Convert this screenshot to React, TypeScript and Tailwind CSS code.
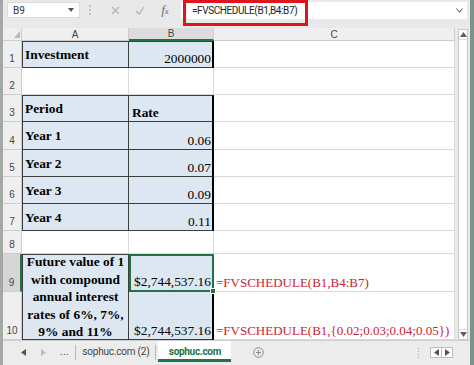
import React from "react";

const hdr =
  "bg-[#efefef] border-r border-b border-[#cdcdcd] flex items-end justify-center pb-[3px] text-[10px] leading-[11px] text-[#444] font-['Liberation_Sans',sans-serif]";
const empty = "bg-white border-r border-b border-[#dadada]";
const aTop =
  "bg-[#dde7f2] border border-[#3d3d3d] flex items-center pl-[2px] font-bold whitespace-nowrap";
const aMid =
  "bg-[#dde7f2] border-l border-r border-b border-[#3d3d3d] flex items-center pl-[2px] font-bold whitespace-nowrap";
const bTop =
  "bg-[#dde7f2] border-t border-b border-l-0 border-[#3d3d3d] border-r-2 border-r-black flex items-end justify-end pr-[1px] pb-[1px] whitespace-nowrap";
const bMid =
  "bg-[#dde7f2] border-b border-[#3d3d3d] border-r-2 border-r-black flex items-end justify-end pr-[1px] pb-[1px] whitespace-nowrap";
const cRed =
  "bg-white border-r border-b border-[#dadada] flex items-end pl-[2px] pb-[1px] text-[13px] text-[#cc2233] whitespace-nowrap";

function Tri({ dir, color }: { dir: "l" | "r" | "u" | "d"; color: string }) {
  const pts =
    dir === "l"
      ? "5,0 5,7 0,3.5"
      : dir === "r"
      ? "0,0 0,7 5,3.5"
      : dir === "u"
      ? "0,5 7,5 3.5,0"
      : "0,0 7,0 3.5,5";
  const w = dir === "l" || dir === "r" ? 5 : 7;
  const h = dir === "l" || dir === "r" ? 7 : 5;
  return (
    <svg width={w} height={h} viewBox={`0 0 ${w} ${h}`}>
      <polygon points={pts} fill={color} />
    </svg>
  );
}

export default function App() {
  return (
    <div className="w-[474px] h-[365px] flex bg-[#e9e9e9] overflow-hidden">
      <div className="w-[3px] bg-[#a4a9a6]" />
      <div className="w-[467px] flex flex-col">
        {/* formula bar */}
        <div className="h-[28px] relative flex items-start pt-[2px] font-['Roboto',sans-serif]">
          <div className="ml-[4px] w-[73px] h-[16px] bg-white border border-[#dcdcdc] flex items-center justify-between pl-[5px] pr-[5px]">
            <span className="text-[10px] text-[#333]">B9</span>
            <svg width="6" height="4" viewBox="0 0 6 4">
              <polygon points="0,0 6,0 3,4" fill="#555" />
            </svg>
          </div>
          <div className="w-[20px] h-[16px] flex flex-col items-center justify-center gap-[2px]">
            <div className="w-[2px] h-[2px] bg-[#c4c4c4]" />
            <div className="w-[2px] h-[2px] bg-[#c4c4c4]" />
            <div className="w-[2px] h-[2px] bg-[#c4c4c4]" />
          </div>
          <div className="w-[30px] h-[16px] flex items-center justify-center">
            <svg width="9" height="9" viewBox="0 0 9 9">
              <path d="M1 1 L8 8 M8 1 L1 8" stroke="#b0b0b0" strokeWidth="1.2" />
            </svg>
          </div>
          <div className="w-[20px] h-[16px] flex items-center justify-center">
            <svg width="10" height="9" viewBox="0 0 10 9">
              <path d="M1 5 L4 8 L9 1" stroke="#b0b0b0" strokeWidth="1.2" fill="none" />
            </svg>
          </div>
          <div className="w-[30px] h-[16px] flex items-center justify-center font-['Liberation_Serif',serif] italic text-[12px] leading-[12px] text-[#666]">
            f<span className="text-[8px] leading-[8px] mt-[4px]">x</span>
          </div>
          <div className="ml-[1px] mr-[3px] flex-1 h-[17px] bg-white flex items-center justify-between pl-[11px] pr-[4px]">
            <span className="text-[10px] tracking-[-0.4px] text-[#222]">=FVSCHEDULE(B1,B4:B7)</span>
            <svg width="7" height="5" viewBox="0 0 7 5">
              <path d="M0.5 0.5 L3.5 4 L6.5 0.5" stroke="#666" strokeWidth="1.1" fill="none" />
            </svg>
          </div>
          <div className="absolute left-[180px] top-0 w-[125px] h-[26px] border-[3px] border-[#e0141f]" />
        </div>

        {/* grid + scrollbar */}
        <div className="h-[312px] flex">
          <div className="grid grid-cols-[19px_107px_85px_241px] grid-rows-[13px_27px_27px_27px_28px_27px_27px_27px_23px_38px_48px] w-[452px] font-['Liberation_Serif',serif] text-[13.4px] leading-[15px] text-black">
            {/* header row */}
            <div className="bg-[#efefef] border-r border-b border-[#cdcdcd] flex items-end justify-end pr-[1px] pb-[2px]">
              <svg width="6" height="7" viewBox="0 0 6 7">
                <polygon points="6,0 6,7 0,7" fill="#b8b8b8" />
              </svg>
            </div>
            <div className="bg-[#efefef] border-r border-b border-[#cdcdcd] flex items-center justify-center text-[10px] text-[#444] font-['Liberation_Sans',sans-serif]">
              A
            </div>
            <div className="bg-[#dcdcdc] border-r border-r-[#cdcdcd] border-b-2 border-b-[#217346] flex items-center justify-center text-[10px] text-[#444] font-['Liberation_Sans',sans-serif]">
              B
            </div>
            <div className="bg-[#efefef] border-r border-b border-[#cdcdcd] flex items-center justify-center text-[10px] text-[#444] font-['Liberation_Sans',sans-serif]">
              C
            </div>

            {/* row 1 */}
            <div className={hdr}>1</div>
            <div className={aTop}>Investment</div>
            <div className={bTop}>2000000</div>
            <div className={empty} />

            {/* row 2 */}
            <div className={hdr}>2</div>
            <div className={empty} />
            <div className={empty} />
            <div className={empty} />

            {/* row 3 */}
            <div className={hdr}>3</div>
            <div className={aTop}>Period</div>
            <div className="bg-[#dde7f2] border-t border-b border-[#3d3d3d] border-r-2 border-r-black flex items-end justify-start pl-[3px] pb-[1px] font-bold">
              Rate
            </div>
            <div className={empty} />

            {/* rows 4-7 */}
            <div className={hdr}>4</div>
            <div className={aMid}>Year 1</div>
            <div className={bMid}>0.06</div>
            <div className={empty} />

            <div className={hdr}>5</div>
            <div className={aMid}>Year 2</div>
            <div className={bMid}>0.07</div>
            <div className={empty} />

            <div className={hdr}>6</div>
            <div className={aMid}>Year 3</div>
            <div className={bMid}>0.09</div>
            <div className={empty} />

            <div className={hdr}>7</div>
            <div className={aMid}>Year 4</div>
            <div className={bMid}>0.11</div>
            <div className={empty} />

            {/* row 8 */}
            <div className={hdr}>8</div>
            <div className={empty} />
            <div className={empty} />
            <div className={empty} />

            {/* row 9 */}
            <div className="bg-[#d6d6d6] border-b border-b-[#cdcdcd] border-r-2 border-r-[#217346] flex items-end justify-center pb-[3px] text-[10px] leading-[11px] text-[#444] font-['Liberation_Sans',sans-serif]">
              9
            </div>
            <div className="row-span-2 bg-[#dde7f2] border border-[#3d3d3d] flex flex-col items-center justify-center text-center font-bold leading-[17.5px] whitespace-nowrap">
              <div>Future value of 1</div>
              <div>with compound</div>
              <div>annual interest</div>
              <div>rates of 6%, 7%,</div>
              <div>9% and 11%</div>
            </div>
            <div className="relative bg-[#dde7f2] border-2 border-[#217346] flex items-end justify-end pr-[1px] pb-[1px] whitespace-nowrap">
              $2,744,537.16
              <div className="absolute -right-[4px] -bottom-[4px] w-[6px] h-[6px] bg-[#217346] border border-white" />
            </div>
            <div className={cRed}>=FVSCHEDULE(B1,B4:B7)</div>

            {/* row 10 */}
            <div className={hdr}>10</div>
            <div className={bMid}>$2,744,537.16</div>
            <div className={cRed}>=FVSCHEDULE(B1,{"{"}0.02;0.03;0.04;0.05{"}"})</div>
          </div>

          {/* vertical scrollbar */}
          <div className="w-[15px] pl-[3px] pr-[2px] pt-[1px] flex flex-col">
            <div className="flex-1 bg-white border border-[#c8c8c8] flex flex-col justify-between">
              <div className="h-[10px] flex items-center justify-center border-b border-[#dcdcdc]">
                <Tri dir="u" color="#606060" />
              </div>
              <div className="h-[10px] flex items-center justify-center border-t border-[#dcdcdc]">
                <Tri dir="d" color="#606060" />
              </div>
            </div>
          </div>
        </div>

        {/* sheet tabs */}
        <div className="h-[25px] bg-[#ececec] border-t border-[#cfcfcf] flex items-start font-['Roboto',sans-serif]">
          <div className="ml-[18px] mt-[8px]">
            <Tri dir="l" color="#555" />
          </div>
          <div className="ml-[15px] mt-[8px]">
            <Tri dir="r" color="#bdbdbd" />
          </div>
          <div className="ml-[14px] mt-[5px] text-[10px] leading-[12px] text-[#444] tracking-[0.5px]">...</div>
          <div className="ml-[6px] mt-[4px] w-[1px] h-[15px] bg-[#b8b8b8]" />
          <div className="w-[79px] mt-[5px] text-center text-[10px] leading-[12px] tracking-[-0.2px] text-[#444] whitespace-nowrap">
            sophuc.com (2)
          </div>
          <div className="mt-[4px] w-[1px] h-[15px] bg-[#b8b8b8]" />
          <div className="ml-[2px] w-[73px] h-[21px] bg-white border-b-[3px] border-[#217346] flex items-center justify-center pt-[3px] text-[10px] leading-[12px] font-bold tracking-[-0.3px] text-[#217346] whitespace-nowrap">
            sophuc.com
          </div>
          <div className="ml-[22px] mt-[6px]">
            <svg width="11" height="11" viewBox="0 0 11 11">
              <circle cx="5.5" cy="5.5" r="4.8" stroke="#8a8a8a" strokeWidth="1" fill="none" />
              <path d="M5.5 3 V8 M3 5.5 H8" stroke="#8a8a8a" strokeWidth="1.1" />
            </svg>
          </div>
          <div className="ml-[154px] mt-[7px] flex flex-col gap-[2px]">
            <div className="w-[1px] h-[1px] bg-[#aaa]" />
            <div className="w-[1px] h-[1px] bg-[#aaa]" />
            <div className="w-[1px] h-[1px] bg-[#aaa]" />
            <div className="w-[1px] h-[1px] bg-[#aaa]" />
          </div>
          <div className="ml-[11px] mt-[6px] w-[23px] h-[11px] bg-white border border-[#bdbdbd] flex items-center">
            <div className="flex-1 flex items-center justify-center">
              <Tri dir="l" color="#555" />
            </div>
            <div className="w-[1px] h-full bg-[#bdbdbd]" />
            <div className="flex-1 flex items-center justify-center">
              <Tri dir="r" color="#555" />
            </div>
          </div>
        </div>
      </div>
      <div className="w-[4px] bg-[#7f938a]" />
    </div>
  );
}
